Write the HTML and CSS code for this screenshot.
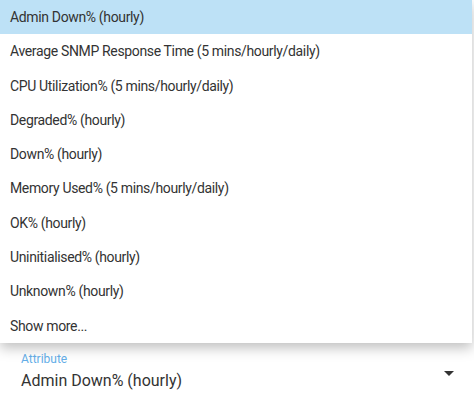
FILE: index.html
```html
<!DOCTYPE html>
<html lang="en">
<head>
  <meta charset="UTF-8">
  <title>Attribute select</title>
  <link rel="stylesheet" href="styles.css">
</head>
<body>
  <div class="campo">
    <label class="rotulo">Attribute</label>
    <div class="valor">
      <span>Admin Down% (hourly)</span>
      <span class="seta"></span>
    </div>
  </div>

  <!-- menu aberto sobre o campo -->
  <ul class="menu">
    <li class="item ativo">Admin Down% (hourly)</li>
    <li class="item">Average SNMP Response Time (5 mins/hourly/daily)</li>
    <li class="item">CPU Utilization% (5 mins/hourly/daily)</li>
    <li class="item">Degraded% (hourly)</li>
    <li class="item">Down% (hourly)</li>
    <li class="item">Memory Used% (5 mins/hourly/daily)</li>
    <li class="item">OK% (hourly)</li>
    <li class="item">Uninitialised% (hourly)</li>
    <li class="item">Unknown% (hourly)</li>
    <li class="item">Show more...</li>
  </ul>
</body>
</html>
```

FILE: styles.css
```css
* {
  margin: 0;
  padding: 0;
  box-sizing: border-box;
}

body {
  font-family: Roboto, "Liberation Sans", sans-serif;
  background: #fff;
  color: #333;
  position: relative;
  height: 402px;
  overflow: hidden;
}

.campo {
  padding: 351px 20px 0 21px;
}

.rotulo {
  display: block;
  font-size: 12px;
  line-height: 16px;
  color: #64aee8;
}

.valor {
  display: flex;
  justify-content: space-between;
  align-items: center;
  font-size: 16px;
  line-height: 24px;
  color: #333;
  margin-top: 2px;
}

.seta {
  width: 0;
  height: 0;
  border-left: 5px solid transparent;
  border-right: 5px solid transparent;
  border-top: 5px solid #333;
  margin-top: -16px;
}

.menu {
  position: absolute;
  top: 0;
  left: 0;
  width: 472px;
  list-style: none;
  background: #fff;
  box-shadow: 0px 5px 12px rgba(0, 0, 0, 0.25);
}

.item {
  height: 34.3px;
  line-height: 34px;
  padding-left: 10px;
  font-size: 14px;
  letter-spacing: -0.35px;
  color: #333;
  white-space: nowrap;
}

.ativo {
  background: #bde1f6;
}
```
